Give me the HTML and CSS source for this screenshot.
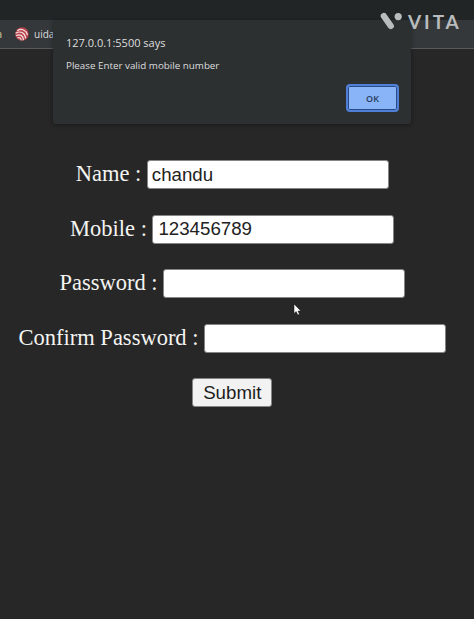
FILE: index.html
```html
<!DOCTYPE html>
<html lang="en">
<head>
    <meta charset="UTF-8">
    <title>Form Validation</title>
    <link rel="stylesheet" href="styles.css">
</head>
<body>
    <div class="tab-strip"></div>
    <div class="bookmarks">
        <span class="bookmark-end">a</span>
        <svg class="bookmark-icon" width="14" height="14" viewBox="0 0 14 14">
            <circle cx="7" cy="7" r="6.7" fill="#b9434c"/>
            <g fill="none" stroke="#f3dfe0" stroke-width="1.2" stroke-linecap="round">
                <path d="M2.7 3.4C6 1.2 11.4 3.2 12.3 7.7"/>
                <path d="M1 6C5 3.7 10 5.5 10.6 11"/>
                <path d="M1.3 8.5C5 6.8 8 8.5 8.5 12.6"/>
                <path d="M3 10.8C4.7 10.2 5.8 11 6.2 12.8"/>
            </g>
        </svg>
        <span class="bookmark-name">uida</span>
    </div>

    <form class="signup">
        <div class="row">
            <label for="name">Name :</label>
            <input type="text" id="name" value="chandu">
        </div>
        <div class="row">
            <label for="mobile">Mobile :</label>
            <input type="text" id="mobile" class="mobile" value="123456789">
        </div>
        <div class="row">
            <label for="password">Password :</label>
            <input type="password" id="password">
        </div>
        <div class="row">
            <label for="confirm">Confirm Password :</label>
            <input type="password" id="confirm">
        </div>
        <button type="button" class="submit">Submit</button>
    </form>

    <div class="dialog">
        <div class="dialog-title">127.0.0.1:5500 says</div>
        <div class="dialog-text">Please Enter valid mobile number</div>
        <button type="button" class="ok">OK</button>
    </div>

    <div class="watermark">
        <svg width="23" height="18" viewBox="0 0 23 18">
            <path d="M3.8 4L10.8 14" stroke="#b9bcbd" stroke-width="6.2" stroke-linecap="round"/>
            <circle cx="18.2" cy="4.6" r="3.6" fill="#b9bcbd"/>
        </svg>
        <span class="watermark-name">VITA</span>
    </div>

    <svg class="cursor" width="9" height="14" viewBox="0 0 9 14">
        <path d="M1 1V10.5L3.2 8.6L4.8 12L6.5 11.2L5 8H8Z" fill="#fff" stroke="#111" stroke-width="0.5"/>
    </svg>
</body>
</html>
```

FILE: styles.css
```css
* {
    margin: 0;
    padding: 0;
    box-sizing: border-box;
}

body {
    height: 100vh;
    background: #272727;
    font-family: "Liberation Serif", "Times New Roman", serif;
    color: #f4f4f1;
    overflow: hidden;
}

.tab-strip {
    height: 20px;
    background: #212526;
}

.bookmarks {
    display: flex;
    align-items: center;
    height: 29px;
    background: #35383a;
    border-bottom: 1px solid #58595a;
    font-family: "Open Sans", sans-serif;
    font-size: 10px;
    color: #dcdddd;
}

.bookmark-end {
    width: 2px;
    margin-right: 13px;
    direction: rtl;
    overflow: hidden;
    color: #d6cc9c;
}

.bookmark-icon {
    margin-right: 5px;
}

.signup {
    display: flex;
    flex-direction: column;
    align-items: center;
    padding: 111px 9.5px 0 0;
}

.row {
    display: flex;
    align-items: center;
    gap: 5.5px;
    height: 29px;
    margin-bottom: 25.5px;
}

label {
    font-size: 22.5px;
    line-height: 26px;
    white-space: nowrap;
    padding-bottom: 1px;
}

input {
    width: 242px;
    height: 29px;
    padding: 0 4px;
    border: 1px solid #858585;
    border-radius: 3px;
    background: #fff;
    color: #222;
    font-family: "Liberation Sans", Arial, sans-serif;
    font-size: 18.7px;
}

.mobile {
    padding-left: 5px;
}

.submit {
    width: 80px;
    height: 29px;
    border: 1px solid #858585;
    border-radius: 3px;
    background: #f2f2f2;
    color: #1d1d1d;
    font-family: "Liberation Sans", Arial, sans-serif;
    font-size: 18.7px;
}

.dialog {
    position: absolute;
    top: 20px;
    left: 53px;
    display: flex;
    flex-direction: column;
    width: 358px;
    height: 104px;
    padding: 15px 12px 12px 13px;
    border-radius: 0 0 3px 3px;
    background: #2d3031;
    box-shadow: 0 1px 4px rgba(0, 0, 0, 0.4);
    font-family: "Open Sans", sans-serif;
    color: #dedfdf;
}

.dialog-title {
    font-size: 11px;
    line-height: 16px;
}

.dialog-text {
    margin-top: 8px;
    font-size: 9.8px;
    line-height: 14px;
}

.ok {
    align-self: flex-end;
    width: 53px;
    height: 28px;
    margin-top: auto;
    border: 2px solid #4f7fd6;
    border-radius: 4px;
    background: #8ab4f8;
    box-shadow: inset 0 0 0 1px #284a88;
    color: #263b5c;
    font-family: "Open Sans", sans-serif;
    font-size: 9px;
    font-weight: 600;
}

.watermark {
    position: absolute;
    top: 11px;
    left: 380px;
    display: flex;
    align-items: center;
    gap: 5px;
    height: 20px;
    color: #b9bcbd;
}

.watermark-name {
    font-family: Lato, sans-serif;
    font-size: 19px;
    font-weight: 700;
    letter-spacing: 2.9px;
}

.cursor {
    position: absolute;
    top: 303px;
    left: 293px;
}
```
